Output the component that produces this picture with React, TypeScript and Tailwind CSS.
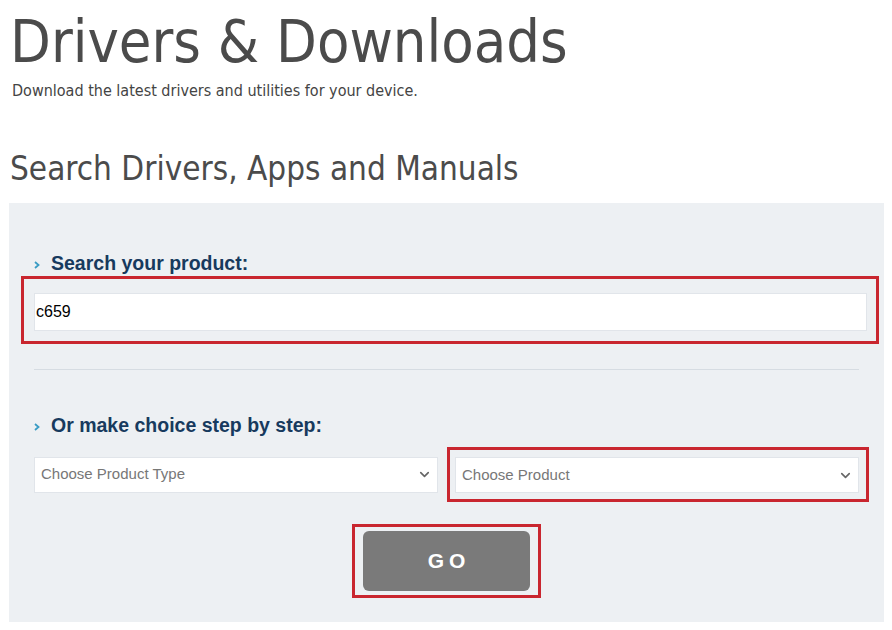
import { ChevronDown } from "lucide-react";

const Bullet = () => (
  <svg width="6" height="8" viewBox="0 0 6 8" className="mr-[11px] mt-[3px] shrink-0">
    <path d="M1 1 L4.5 4 L1 7" fill="none" stroke="#3a9cc4" strokeWidth="1.8" />
  </svg>
);

const Select = ({ label }: { label: string }) => (
  <div className="flex h-[36px] w-full items-center justify-between border border-[#e1e5ea] bg-white pl-[6px] pr-[5px] font-['Liberation_Sans',Arial,sans-serif] text-[15px] text-[#777]">
    <span>{label}</span>
    <ChevronDown size={15} strokeWidth={2.6} className="text-[#666]" />
  </div>
);

export default function App() {
  return (
    <div className="min-h-[630px] bg-white">
      <div className="pl-[9px] pr-[8px] font-['DejaVu_Sans_Condensed','DejaVu_Sans',Verdana,sans-serif] font-stretch-semi-condensed">
        <h1 className="pt-[8px] pl-[1px] text-[59px] leading-[68px] text-[#4b4b4b]">
          Drivers &amp; Downloads
        </h1>
        <p className="mt-[5px] pl-[3px] text-[16px] leading-[20px] text-[#444]">
          Download the latest drivers and utilities for your device.
        </p>
        <h2 className="mt-[47px] pl-[1px] text-[33px] leading-[42px] text-[#4b4b4b]">
          Search Drivers, Apps and Manuals
        </h2>

        <div className="mt-[13px] bg-[#edf0f3] pl-[25px] pr-[25px] pt-[48px] pb-[24px] font-['Liberation_Sans',Arial,sans-serif] font-stretch-normal">
          <div className="flex items-center text-[19.5px] font-bold leading-[24px] text-[#173a5e]">
            <Bullet />
            Search your product:
          </div>
          <div className="-ml-[13px] -mr-[20px] mt-[1px] border-[3px] border-[#c9262f] pl-[10px] pr-[9px] pt-[14px] pb-[10px]">
            <input
              type="text"
              defaultValue="c659"
              className="h-[38px] w-full border border-[#e1e5ea] bg-white px-[1px] text-[16px] text-black outline-none"
            />
          </div>

          <div className="mt-[25px] h-px bg-[#d6dce2]" />

          <div className="mt-[43px] flex items-center text-[19.5px] font-bold leading-[24px] text-[#173a5e]">
            <Bullet />
            Or make choice step by step:
          </div>

          <div className="mt-[10px] flex items-center gap-[9px]">
            <div className="w-[404px] shrink-0">
              <Select label="Choose Product Type" />
            </div>
            <div className="-mr-[10px] flex-1 border-[3px] border-[#c9262f] pb-[6px] pl-[5px] pr-[7px] pt-[7px]">
              <Select label="Choose Product" />
            </div>
          </div>

          <div className="mt-[22px] flex justify-center">
            <div className="border-[3px] border-[#c9262f] px-[8px] py-[4px]">
              <button className="flex h-[60px] w-[167px] items-center justify-center rounded-[6px] bg-[#7a7a7a] text-[21px] font-bold tracking-[5px] pl-[5px] text-white">
                GO
              </button>
            </div>
          </div>
        </div>
      </div>
    </div>
  );
}
